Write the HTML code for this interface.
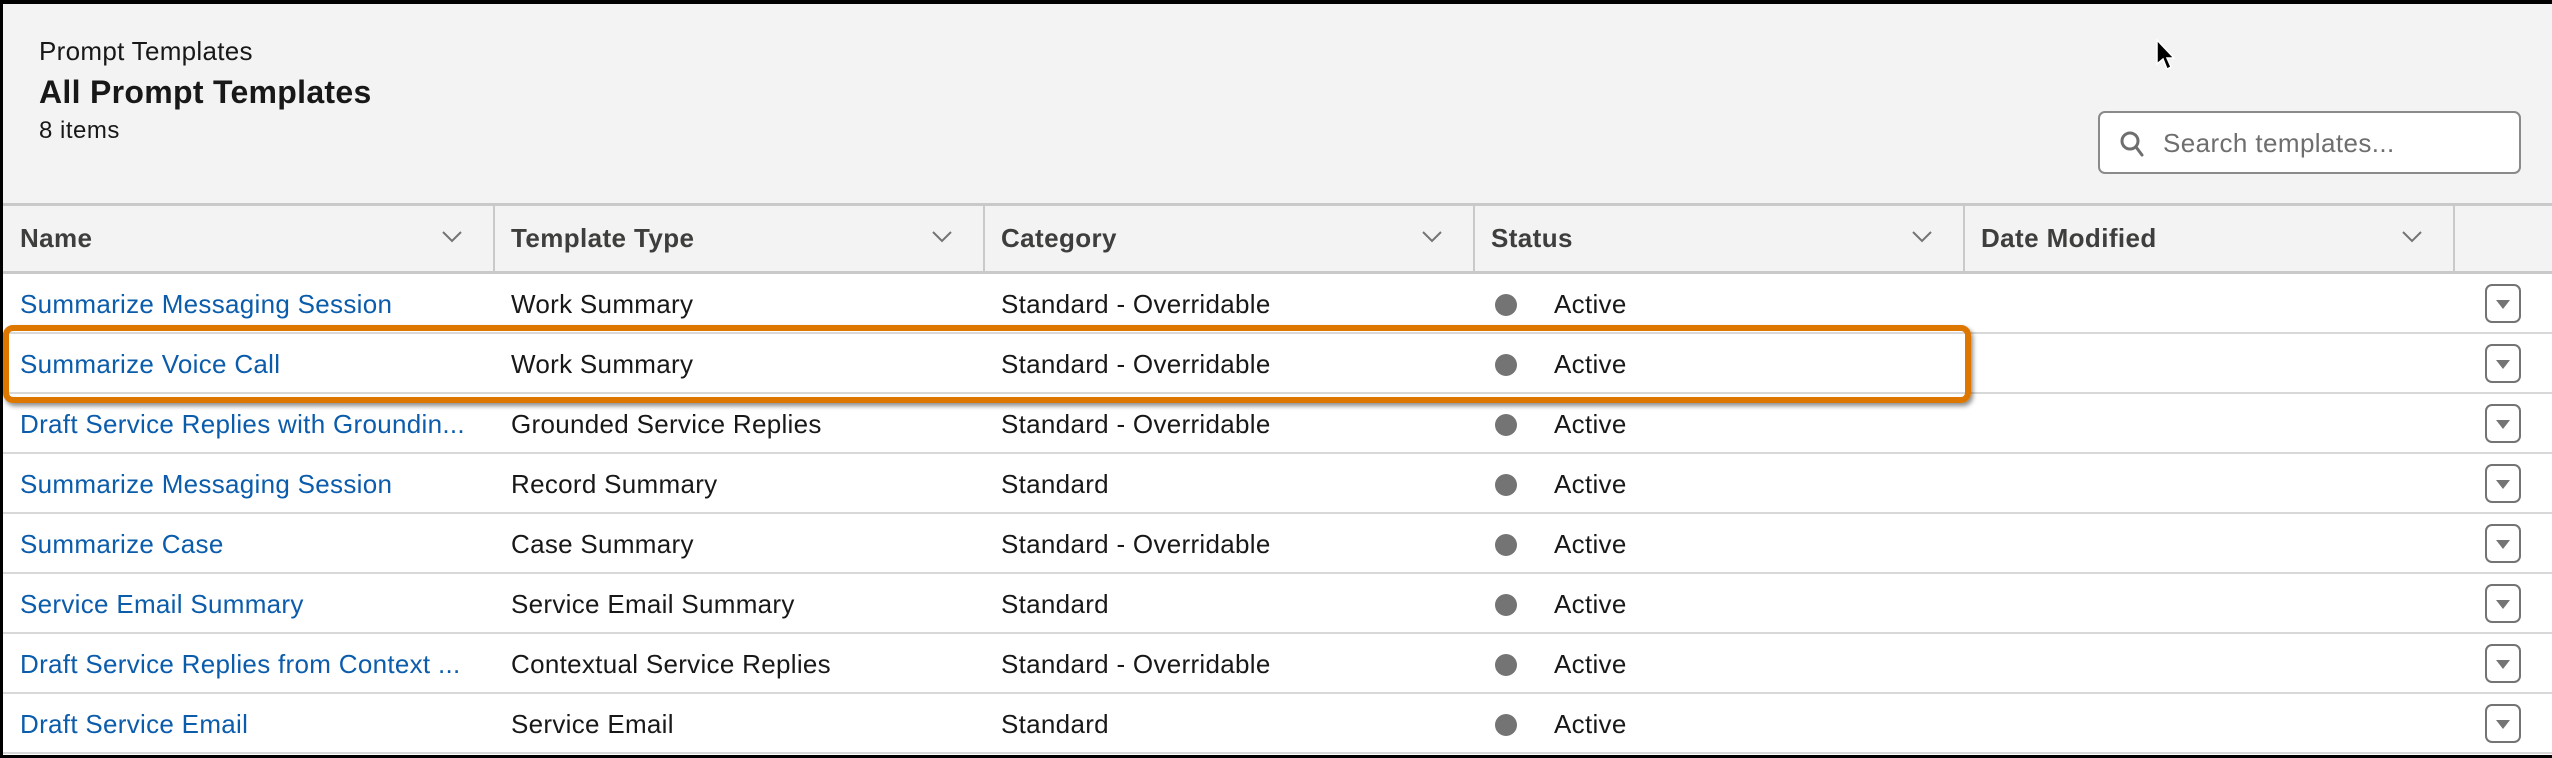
<!DOCTYPE html>
<html><head><meta charset="utf-8"><style>
*{margin:0;padding:0;box-sizing:border-box}
body{width:2552px;height:758px;overflow:hidden;background:#000;font-family:"Liberation Sans",sans-serif;position:relative}
#wrap{position:absolute;left:3px;top:4px;width:2549px;height:751px;background:#fff;overflow:hidden}
#top{position:absolute;left:0;top:0;width:100%;height:199px;background:#f3f3f3}
.t{position:absolute;white-space:nowrap}
#hdr{position:absolute;left:0;top:199px;width:100%;height:71px;background:#f3f3f3;border-top:3px solid #c9c9c9;border-bottom:3px solid #c9c9c9}
.h{position:absolute;top:17px;font-size:26px;font-weight:bold;color:#3e3e3c;letter-spacing:0.4px}
.sep{position:absolute;top:0;width:2px;height:65px;background:#c9c9c9}
.chev{position:absolute;top:18px}
.row{position:absolute;left:0;width:100%;height:60px;border-bottom:2px solid #d8d8d8}
.c{position:absolute;top:15px;font-size:26px;color:#181818;white-space:nowrap;letter-spacing:0.3px}
.lnk{color:#0b5cab}
.dot{position:absolute;left:1492px;top:20px;width:22px;height:22px;border-radius:50%;background:#747474}
.btn{position:absolute;left:2482px;top:10px;width:36px;height:39px;border:2px solid #747474;border-radius:7px;background:#fff}
.btn:after{content:"";position:absolute;left:9px;top:14px;border-left:7px solid transparent;border-right:7px solid transparent;border-top:9px solid #747474}
</style></head><body>
<div id="wrap">
<div id="top">
<div class="t" style="left:36px;top:32px;font-size:26px;color:#181818;letter-spacing:0.3px">Prompt Templates</div>
<div class="t" style="left:36px;top:70px;font-size:32px;font-weight:bold;color:#181818;letter-spacing:0.3px">All Prompt Templates</div>
<div class="t" style="left:36px;top:113px;font-size:24px;color:#181818;letter-spacing:0.5px">8 items</div>
<div style="position:absolute;left:2095px;top:107px;width:423px;height:63px;background:#fff;border:2px solid #8a8a8a;border-radius:7px">
<svg style="position:absolute;left:19px;top:17px" width="26" height="28" viewBox="0 0 26 28"><circle cx="11" cy="11" r="8" fill="none" stroke="#6e6e6e" stroke-width="3"/><path d="M17 17 L23 25" stroke="#6e6e6e" stroke-width="3" stroke-linecap="round"/></svg>
<div class="t" style="left:63px;top:15px;font-size:26px;color:#6e6e6e;letter-spacing:0.4px">Search templates...</div>
</div>
<svg style="position:absolute;left:2152px;top:34px" width="22" height="40" viewBox="0 0 22 40"><path d="M2 2 L2 26 L8 21 L12 31 L16 29 L12 20 L19 20 Z" fill="#000" stroke="#fff" stroke-width="1.5"/></svg>
</div>
<div id="hdr">
<div class="h" style="left:17px">Name</div>
<div class="h" style="left:508px">Template Type</div>
<div class="h" style="left:998px">Category</div>
<div class="h" style="left:1488px">Status</div>
<div class="h" style="left:1978px">Date Modified</div>
<div class="sep" style="left:490px"></div><div class="sep" style="left:980px"></div><div class="sep" style="left:1470px"></div><div class="sep" style="left:1960px"></div><div class="sep" style="left:2450px"></div>
<svg class="chev" style="left:437px" width="24" height="24"><path d="M3 8 L12 17 L21 8" fill="none" stroke="#747474" stroke-width="2"/></svg>
<svg class="chev" style="left:927px" width="24" height="24"><path d="M3 8 L12 17 L21 8" fill="none" stroke="#747474" stroke-width="2"/></svg>
<svg class="chev" style="left:1417px" width="24" height="24"><path d="M3 8 L12 17 L21 8" fill="none" stroke="#747474" stroke-width="2"/></svg>
<svg class="chev" style="left:1907px" width="24" height="24"><path d="M3 8 L12 17 L21 8" fill="none" stroke="#747474" stroke-width="2"/></svg>
<svg class="chev" style="left:2397px" width="24" height="24"><path d="M3 8 L12 17 L21 8" fill="none" stroke="#747474" stroke-width="2"/></svg>
</div>

<div class="row" style="top:270px"><div class="c lnk" style="left:17px">Summarize Messaging Session</div><div class="c" style="left:508px">Work Summary</div><div class="c" style="left:998px">Standard - Overridable</div><div class="dot"></div><div class="c" style="left:1551px">Active</div><div class="btn"></div></div>
<div class="row" style="top:330px"><div class="c lnk" style="left:17px">Summarize Voice Call</div><div class="c" style="left:508px">Work Summary</div><div class="c" style="left:998px">Standard - Overridable</div><div class="dot"></div><div class="c" style="left:1551px">Active</div><div class="btn"></div></div>
<div class="row" style="top:390px"><div class="c lnk" style="left:17px">Draft Service Replies with Groundin...</div><div class="c" style="left:508px">Grounded Service Replies</div><div class="c" style="left:998px">Standard - Overridable</div><div class="dot"></div><div class="c" style="left:1551px">Active</div><div class="btn"></div></div>
<div class="row" style="top:450px"><div class="c lnk" style="left:17px">Summarize Messaging Session</div><div class="c" style="left:508px">Record Summary</div><div class="c" style="left:998px">Standard</div><div class="dot"></div><div class="c" style="left:1551px">Active</div><div class="btn"></div></div>
<div class="row" style="top:510px"><div class="c lnk" style="left:17px">Summarize Case</div><div class="c" style="left:508px">Case Summary</div><div class="c" style="left:998px">Standard - Overridable</div><div class="dot"></div><div class="c" style="left:1551px">Active</div><div class="btn"></div></div>
<div class="row" style="top:570px"><div class="c lnk" style="left:17px">Service Email Summary</div><div class="c" style="left:508px">Service Email Summary</div><div class="c" style="left:998px">Standard</div><div class="dot"></div><div class="c" style="left:1551px">Active</div><div class="btn"></div></div>
<div class="row" style="top:630px"><div class="c lnk" style="left:17px">Draft Service Replies from Context ...</div><div class="c" style="left:508px">Contextual Service Replies</div><div class="c" style="left:998px">Standard - Overridable</div><div class="dot"></div><div class="c" style="left:1551px">Active</div><div class="btn"></div></div>
<div class="row" style="top:690px"><div class="c lnk" style="left:17px">Draft Service Email</div><div class="c" style="left:508px">Service Email</div><div class="c" style="left:998px">Standard</div><div class="dot"></div><div class="c" style="left:1551px">Active</div><div class="btn"></div></div>

<div style="position:absolute;left:0;top:321px;width:1968px;height:78px;border:6px solid #dd7700;border-radius:10px;box-shadow:2px 3px 5px rgba(0,0,0,0.45)"></div>
</div>
</body></html>
